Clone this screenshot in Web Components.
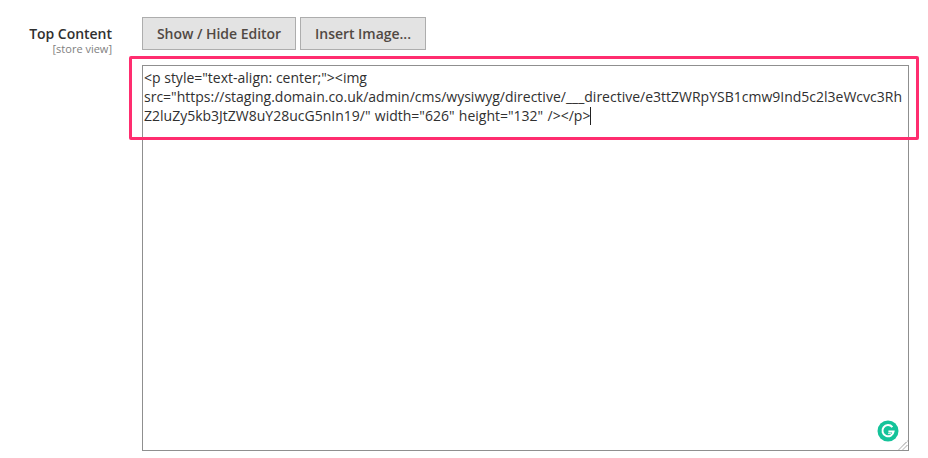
<!DOCTYPE html>
<html><head><meta charset="utf-8"><style>
html,body{margin:0;background:#fff}
body{font-family:"Open Sans",sans-serif;width:928px;height:458px;overflow:hidden}
</style></head><body>
<template id="t-btn"><style>
:host{display:block;box-sizing:border-box;height:33px;background:#e3e3e3;border:1px solid #adadad;color:#514943;font:600 14px/31px "Open Sans",sans-serif;white-space:nowrap;text-align:center;letter-spacing:-.03px}
</style><slot></slot></template>
<template id="t-label"><style>
:host{display:block;width:112px;text-align:right}
.a{font:600 14px/17px "Open Sans",sans-serif;color:#303030;margin-top:8px;letter-spacing:-.03px}
.b{font:11px/14px "Open Sans",sans-serif;color:#808080}
</style><div class="a"><slot></slot></div><div class="b"><slot name="scope"></slot></div></template>
<template id="t-line"><style>:host{display:block;white-space:pre}</style><slot></slot></template>
<template id="t-caret"><style>:host{display:inline-block;width:1px;height:18px;background:#222;vertical-align:-4px}</style></template>
<template id="t-editor"><style>
:host{display:block;position:relative;box-sizing:border-box;width:767px;height:386px;margin-top:15px;border:1px solid #8f8f8f;background:#fff;padding:2px 0 0 1px;font:14px/19px "Open Sans",sans-serif;color:#303030}
.mark{position:absolute;left:-14px;top:-10px;width:790px;height:84px;box-sizing:border-box;border:3px solid #ff2d6f;border-radius:2px;pointer-events:none}
.g{position:absolute;right:9px;bottom:8px;width:22px;height:22px}
.r{position:absolute;right:0;bottom:0;width:10px;height:10px}
</style><slot></slot><div class="mark"></div>
<svg class="g" viewBox="0 0 22 22"><circle cx="11" cy="11" r="10.5" fill="#15c39a"/><path d="M15.4 7.2A5.6 5.6 0 1 0 16.6 11.4H11.4" fill="none" stroke="#fff" stroke-width="2"/><path d="M11 13.5h3" stroke="#cdeee5" stroke-width="1.2"/></svg>
<svg class="r" viewBox="0 0 10 10"><path d="M1 9.5L9.5 1M5 9.5L9.5 5" stroke="#666" stroke-width="1" stroke-dasharray="1 .6" fill="none"/></svg>
</template>
<template id="t-field"><style>
:host{display:flex;gap:30px;padding:17px 0 0 0}
.main{display:flex;flex-direction:column}
.bar{display:flex;gap:4px}
</style><slot name="label"></slot><div class="main"><div class="bar"><slot name="btn"></slot></div><slot name="editor"></slot></div></template>

<cms-field>
<cms-label slot="label">Top Content<span slot="scope">[store view]</span></cms-label>
<cms-btn slot="btn" style="width:154px">Show / Hide Editor</cms-btn>
<cms-btn slot="btn" style="width:126px">Insert Image...</cms-btn>
<cms-editor slot="editor">
<cms-line>&lt;p style="text-align: center;"&gt;&lt;img</cms-line>
<cms-line>src="https://staging.domain.co.uk/admin/cms/wysiwyg/directive/___directive/e3ttZWRpYSB1cmw9Ind5c2l3eWcvc3Rh</cms-line>
<cms-line style="word-spacing:.7px">Z2luZy5kb3JtZW8uY28ucG5nIn19/" width="626" height="132" /&gt;&lt;/p&gt;<cms-caret></cms-caret></cms-line>
</cms-editor>
</cms-field>
<script>
for (const [n,t] of [['cms-btn','t-btn'],['cms-label','t-label'],['cms-line','t-line'],['cms-caret','t-caret'],['cms-editor','t-editor'],['cms-field','t-field']]) {
  customElements.define(n, class extends HTMLElement {
    constructor(){super();this.attachShadow({mode:'open'}).appendChild(document.getElementById(t).content.cloneNode(true));}
  });
}
</script>
</body></html>
